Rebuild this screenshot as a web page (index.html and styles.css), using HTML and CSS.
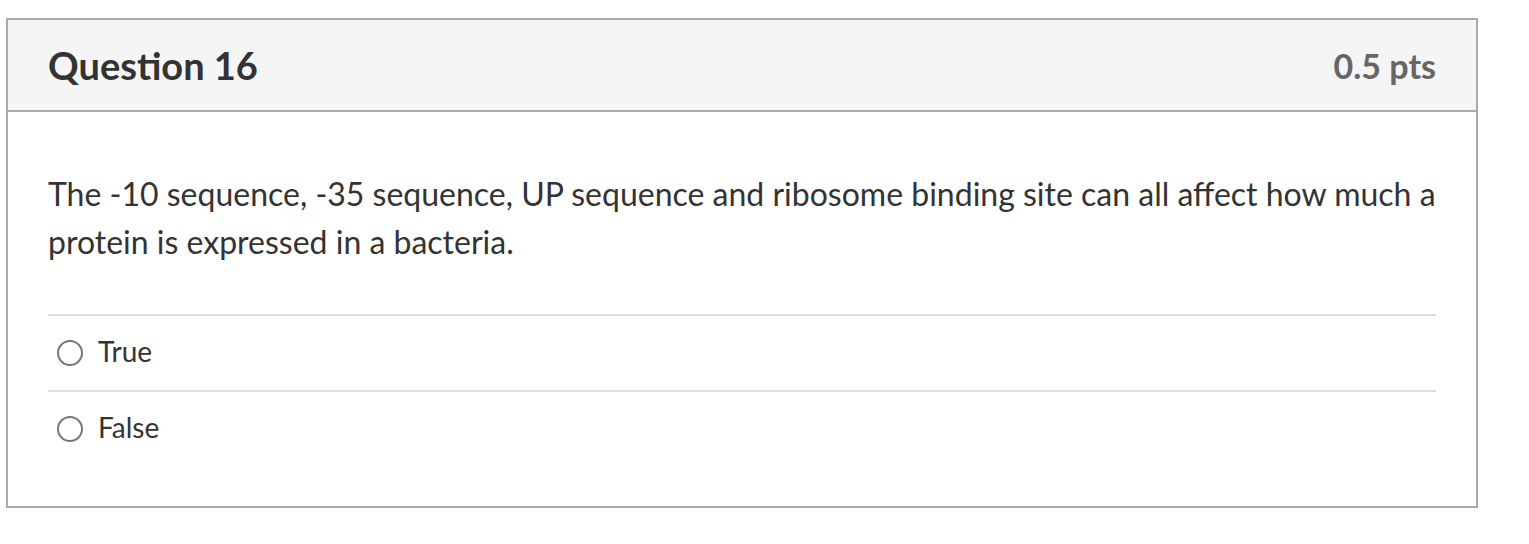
FILE: index.html
```html
<!DOCTYPE html>
<html>
<head>
<meta charset="utf-8">
<link rel="stylesheet" href="styles.css">
</head>
<body>
<div class="question">
  <div class="header">
    <div class="name">Question 16</div>
    <div class="points">0.5 pts</div>
  </div>
  <div class="content">
    <div class="text">The -10 sequence, -35 sequence, UP sequence and ribosome binding site can all affect how much a protein is expressed in a bacteria.</div>
    <div class="answers">
      <label class="answer"><span class="radio"></span><span class="label">True</span></label>
      <label class="answer"><span class="radio"></span><span class="label">False</span></label>
    </div>
  </div>
</div>
</body>
</html>
```
FILE: styles.css
```css
html, body {
  margin: 0;
  padding: 0;
  background: #fff;
}
body {
  padding: 18px 0 0 6px;
  font-family: Lato, "Open Sans", sans-serif;
  color: #333;
}
.question {
  width: 1472px;
  box-sizing: border-box;
  border: 2px solid #aaaaaa;
}
.header {
  height: 90px;
  background: #f5f5f5;
  border-bottom: 2px solid #aaaaaa;
  display: flex;
  align-items: center;
  justify-content: space-between;
  padding: 0 40px;
}
.name {
  font-size: 38px;
  font-weight: 700;
  color: #333;
}
.points {
  font-size: 34px;
  font-weight: 700;
  color: #666;
}
.content {
  padding: 58px 40px 40px 40px;
}
.text {
  font-size: 32px;
  line-height: 48px;
}
.answers {
  margin-top: 48px;
}
.answer {
  display: flex;
  align-items: center;
  height: 74px;
  border-top: 2px solid #dddddd;
}
.radio {
  width: 26px;
  height: 26px;
  box-sizing: border-box;
  border: 2px solid #777;
  border-radius: 50%;
  margin-left: 9px;
  margin-right: 15px;
}
.label {
  font-size: 28px;
  margin-bottom: 4px;
}
```
